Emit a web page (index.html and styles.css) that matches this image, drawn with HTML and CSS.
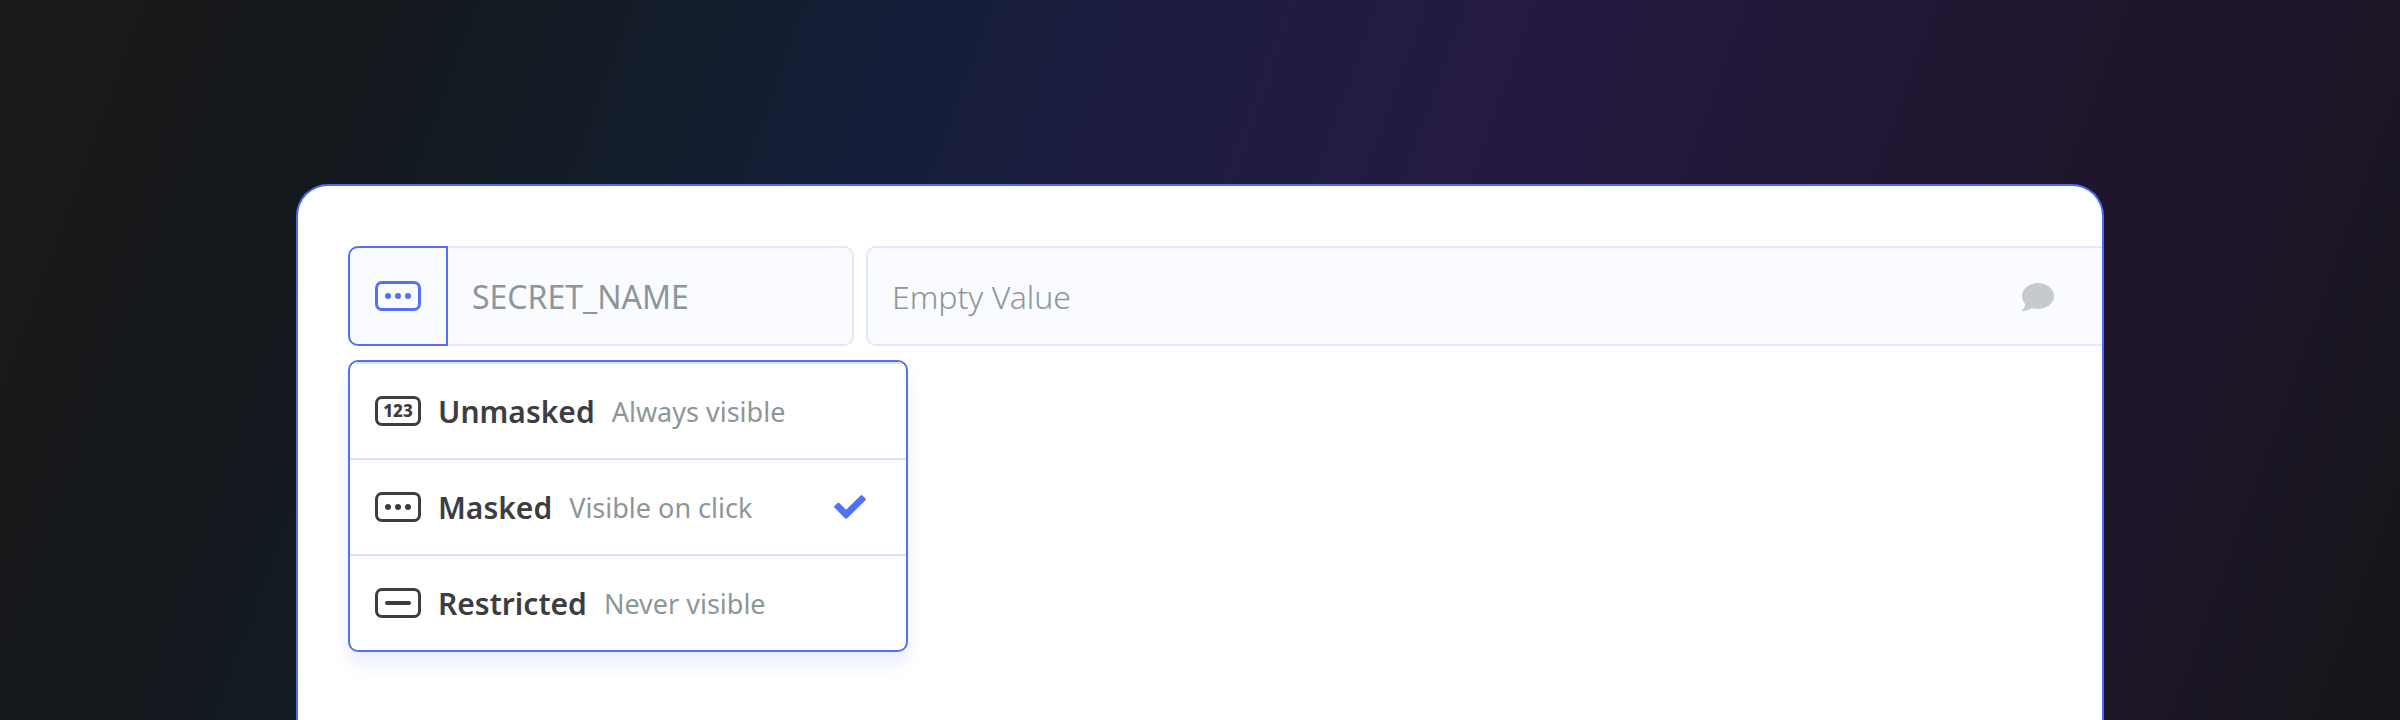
FILE: index.html
```html
<!DOCTYPE html>
<html lang="en">
<head>
  <meta charset="UTF-8">
  <title>Secret visibility</title>
  <meta name="viewport" content="width=device-width, initial-scale=1.0">
  <link rel="stylesheet" href="styles.css">
</head>
<body>
  <main class="card">
    <div class="secret-row">
      <div class="name-field">
        <button class="mask-btn" type="button" aria-label="Change visibility" aria-expanded="true">
          <svg class="mask-icon" viewBox="0 0 46 30">
            <rect x="1.5" y="1.5" width="43" height="27" rx="5.5" fill="none" stroke="currentColor" stroke-width="3"/>
            <circle cx="13" cy="15" r="3"/>
            <circle cx="23" cy="15" r="3"/>
            <circle cx="33" cy="15" r="3"/>
          </svg>
        </button>
        <input class="name-input" type="text" placeholder="SECRET_NAME" aria-label="Secret name">
      </div>
      <div class="value-field">
        <input class="value-input" type="text" placeholder="Empty Value" aria-label="Secret value">
        <button class="note-btn" type="button" aria-label="Add note">
          <svg class="note-icon" viewBox="0 0 32 28">
            <path d="M16 0C7.2 0 0 5.800 0 13c0 3.100 1.300 5.900 3.500 8.200C3 23.500 1.500 25.700 0 27.300c-.3.300-.1.700.3.700 4 0 7-1.500 9.200-3.100 2 .7 4.200 1.100 6.500 1.100 8.800 0 16-5.800 16-13S24.800 0 16 0z"/>
          </svg>
        </button>
      </div>
    </div>

    <!-- Visibility menu -->
    <div class="menu">
      <button class="option" type="button">
        <svg class="mask-icon" viewBox="0 0 46 30">
          <rect x="1.5" y="1.5" width="43" height="27" rx="5.5" fill="none" stroke="currentColor" stroke-width="3"/>
          <text class="digits" x="23" y="21" text-anchor="middle">123</text>
        </svg>
        <span class="label">Unmasked</span>
        <span class="hint">Always visible</span>
      </button>
      <button class="option" type="button">
        <svg class="mask-icon" viewBox="0 0 46 30">
          <rect x="1.5" y="1.5" width="43" height="27" rx="5.5" fill="none" stroke="currentColor" stroke-width="3"/>
          <circle cx="13" cy="15" r="3"/>
          <circle cx="23" cy="15" r="3"/>
          <circle cx="33" cy="15" r="3"/>
        </svg>
        <span class="label">Masked</span>
        <span class="hint">Visible on click</span>
        <svg class="check" viewBox="0 0 32 24">
          <path d="M11.2 23.5.5 12.700a1.300 1.300 0 0 1 0-1.700L3.600 8a1.300 1.300 0 0 1 1.700 0l6.800 6.700L26.600.4a1.300 1.300 0 0 1 1.700 0l3.200 3.100a1.300 1.300 0 0 1 0 1.700L12.900 23.500a1.300 1.300 0 0 1-1.700 0z"/>
        </svg>
      </button>
      <button class="option" type="button">
        <svg class="mask-icon" viewBox="0 0 46 30">
          <rect x="1.5" y="1.5" width="43" height="27" rx="5.5" fill="none" stroke="currentColor" stroke-width="3"/>
          <rect x="10" y="13" width="26" height="4" rx="2"/>
        </svg>
        <span class="label">Restricted</span>
        <span class="hint">Never visible</span>
      </button>
    </div>
  </main>
</body>
</html>
```
FILE: styles.css
```css
* {
  box-sizing: border-box;
}
body {
  margin: 0;
  min-height: 100vh;
  padding: 184px 296px 0;
  display: flex;
  font-family: "Noto Sans", sans-serif;
  background: linear-gradient(110deg, #18191a 5%, #14181c 13%, #131c26 23%, #141f38 33%, #1e1c41 46%, #241a43 56%, #24183a 66%, #20162f 77%, #1c1526 90%, #17151a 98%);
}
button,
input {
  font-family: inherit;
  margin: 0;
}
button {
  cursor: pointer;
}
svg {
  fill: currentColor;
  flex: none;
}
.card {
  flex: 1;
  min-width: 0;
  padding: 60px 0 0 50px;
  background: #fff;
  border: 2px solid #4a6cf7;
  border-bottom: none;
  border-radius: 32px 32px 0 0;
}
.secret-row {
  display: flex;
  gap: 12px;
  height: 100px;
}
.name-field {
  display: flex;
  width: 506px;
}
.mask-btn {
  width: 100px;
  padding: 0;
  display: flex;
  align-items: center;
  justify-content: center;
  color: #5271f9;
  background: #fafbff;
  border: 2px solid #5271f9;
  border-radius: 10px 0 0 10px;
}
.mask-icon {
  width: 46px;
  height: 30px;
}
.name-input {
  flex: 1;
  min-width: 0;
  padding: 0 24px;
  font-size: 32px;
  background: #fafbff;
  border: 2px solid #e3e9fb;
  border-left: none;
  border-radius: 0 10px 10px 0;
}
.value-field {
  flex: 1;
  min-width: 0;
  display: flex;
  background: #fafbff;
  border: 2px solid #e3e9fb;
  border-right: none;
  border-radius: 10px 0 0 10px;
}
.value-input {
  flex: 1;
  min-width: 0;
  padding: 0 24px;
  font-size: 32px;
  font-weight: 300;
  background: none;
  border: none;
}
.name-input::placeholder,
.value-input::placeholder {
  color: #8d9698;
  opacity: 1;
}
.note-btn {
  padding: 2px 48px 0 0;
  display: flex;
  align-items: center;
  color: #c5cacd;
  background: none;
  border: none;
}
.note-icon {
  width: 32px;
  height: 28px;
}
.menu {
  width: 560px;
  margin-top: 14px;
  background: #fff;
  border: 2px solid #5271f9;
  border-radius: 10px;
  box-shadow: 0 12px 16px rgba(82, 113, 249, 0.12);
  overflow: hidden;
}
.option {
  width: 100%;
  height: 96px;
  padding: 0 40px 0 25px;
  display: flex;
  align-items: center;
  color: #3d3d3f;
  background: none;
  border: none;
  border-top: 2px solid #d9e3f3;
}
.label {
  margin-left: 17px;
  font-size: 30px;
  font-weight: 600;
}
.hint {
  margin-left: 17px;
  font-size: 27px;
  color: #8d9698;
}
.digits {
  font-size: 17px;
  font-weight: 800;
}
.check {
  width: 32px;
  height: 24px;
  margin-left: auto;
  color: #5271f9;
}
```
